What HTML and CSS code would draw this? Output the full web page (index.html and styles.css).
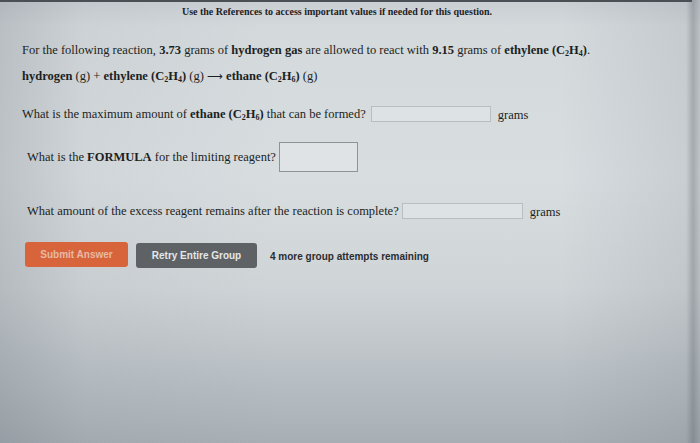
FILE: index.html
```html
<!DOCTYPE html>
<html>
<head>
<meta charset="utf-8">
<link rel="stylesheet" href="styles.css">
</head>
<body>
<div class="screen">
  <div class="topline"></div>
  <div class="refs">Use the References to access important values if needed for this question.</div>
  <div class="content">
    <p class="intro">For the following reaction, <b>3.73</b> grams of <b>hydrogen gas</b> are allowed to react with <b>9.15</b> grams of <b>ethylene (C<sub>2</sub>H<sub>4</sub>)</b>.</p>
    <p class="eq"><b>hydrogen</b> (g) + <b>ethylene (C<sub>2</sub>H<sub>4</sub>)</b> (g) <span class="arrow">&#x27F6;</span> <b>ethane (C<sub>2</sub>H<sub>6</sub>)</b> (g)</p>
    <div class="q q1">
      <span>What is the maximum amount of <b>ethane (C<sub>2</sub>H<sub>6</sub>)</b> that can be formed?</span>
      <span class="box box-wide"></span>
      <span class="unit">grams</span>
    </div>
    <div class="q q2">
      <span>What is the <b>FORMULA</b> for the limiting reagent?</span>
      <span class="box box-formula"></span>
    </div>
    <div class="q q3">
      <span>What amount of the excess reagent remains after the reaction is complete?</span>
      <span class="box box-wide2"></span>
      <span class="unit">grams</span>
    </div>
    <div class="actions">
      <span class="btn btn-submit">Submit Answer</span>
      <span class="btn btn-retry">Retry Entire Group</span>
      <span class="attempts">4 more group attempts remaining</span>
    </div>
  </div>
</div>
</body>
</html>
```
FILE: styles.css
```css
html, body {
  margin: 0;
  padding: 0;
}
body {
  width: 700px;
  height: 443px;
  overflow: hidden;
}
.screen {
  width: 700px;
  height: 443px;
  font-family: "Liberation Serif", "Times New Roman", serif;
  color: #1c1f22;
  background:
    linear-gradient(90deg, rgba(90,98,108,0.22) 0%, rgba(90,98,108,0.06) 12%, rgba(255,255,255,0) 40%, rgba(255,255,255,0) 80%, rgba(90,98,108,0.12) 98%, rgba(70,76,84,0.35) 99%, rgba(90,98,108,0.2) 100%),
    linear-gradient(180deg, #c9ced3 0%, #d4d9dc 6%, #d8dde0 40%, #cfd4d7 65%, #b5bcc1 88%, #a7afb5 100%);
  display: flex;
  flex-direction: column;
}
.topline {
  height: 2px;
  background: #4a4e55;
  margin-right: 8px;
}
.refs {
  font-size: 10px;
  font-weight: bold;
  text-align: center;
  padding-top: 4px;
  padding-right: 26px;
  color: #1f2226;
}
.content {
  padding: 26px 0 0 22px;
  font-size: 12.5px;
}
p {
  margin: 0;
}
sub {
  font-size: 8px;
  vertical-align: -2px;
  line-height: 0;
}
.eq {
  margin-top: 11px;
}
.arrow {
  font-size: 11px;
}
.q {
  display: flex;
  align-items: center;
}
.q1 {
  margin-top: 21px;
}
.box {
  display: inline-block;
  background: #dde2e4;
  border: 1px solid #b9bec1;
}
.box-wide {
  width: 118px;
  height: 14px;
  margin-left: 5px;
}
.unit {
  margin-left: 7px;
  margin-top: 3px;
}
.q2 {
  margin-top: 19px;
  padding-left: 5px;
}
.box-formula {
  width: 77px;
  height: 28px;
  margin-left: 3px;
  border-color: #8e9396;
  background: #dfe3e5;
}
.q3 {
  margin-top: 30px;
  padding-left: 5px;
}
.box-wide2 {
  width: 119px;
  height: 14px;
  margin-left: 3px;
}
.actions {
  display: flex;
  align-items: center;
  margin-top: 21px;
  padding-left: 3px;
  font-family: "Liberation Sans", Arial, sans-serif;
  font-weight: bold;
  font-size: 10px;
}
.btn {
  display: flex;
  align-items: center;
  justify-content: center;
  height: 25px;
  border-radius: 3px;
}
.btn-submit {
  width: 103px;
  background: #d7643b;
  color: #e8b9a3;
}
.btn-retry {
  width: 121px;
  margin-left: 8px;
  margin-top: 2px;
  background: #5e6264;
  color: #e4e7e8;
}
.attempts {
  margin-left: 13px;
  margin-top: 4px;
  color: #2a2d31;
}
```
